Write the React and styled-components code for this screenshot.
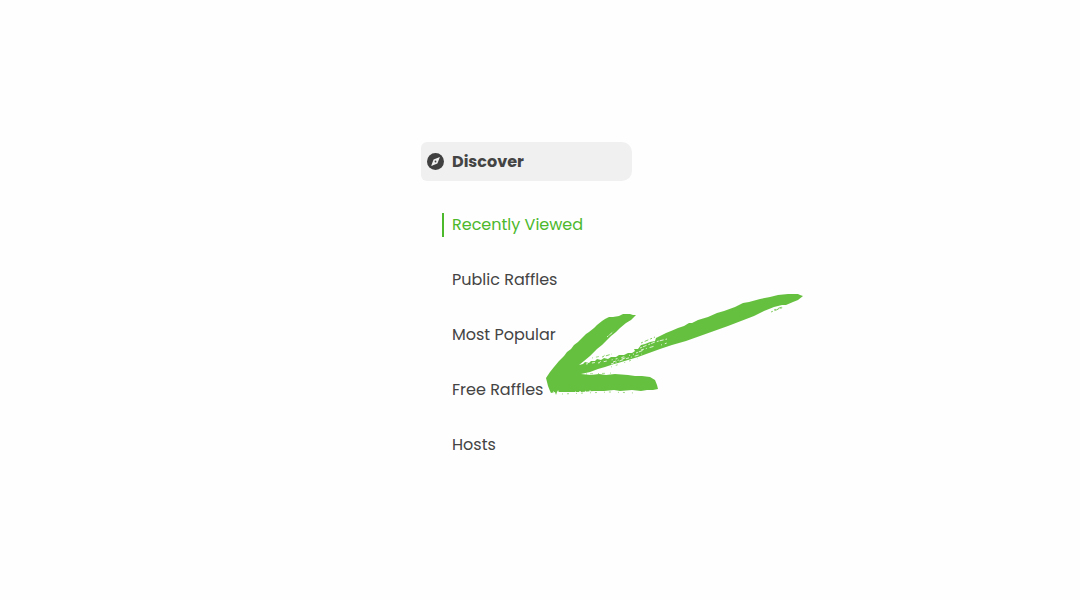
import styled, { createGlobalStyle } from "styled-components"

const GlobalStyle = createGlobalStyle`
    * {
        box-sizing: border-box;
    }
    body {
        margin: 0;
        background-color: #fefefe;
        font-family: Poppins, Inter, sans-serif;
        color: #444444;
    }
`
const Container = styled.main`
    min-height: 100vh;
    display: flex;
    align-items: center;
    justify-content: center;
    padding: 14px 27px 0px 0px;
`
const Sidebar = styled.nav`
    flex: 0 1 211px;
`
const Header = styled.button`
    width: 100%;
    display: flex;
    align-items: center;
    gap: 8px;
    padding: 8px 6px;
    border: none;
    border-radius: 6px 10px 10px 6px;
    background-color: #f0f0f0;
    color: inherit;
    font-family: inherit;
    font-size: 16px;
    line-height: 23px;
    font-weight: 700;
    cursor: pointer;
`
const List = styled.ul`
    list-style: none;
    margin: 16px 0px 0px;
    padding: 0px 0px 0px 21px;
`
const Item = styled.li`
    position: relative;
    height: 55px;
    display: flex;
    align-items: center;
`
const Link = styled.a`
    padding-left: 8px;
    border-left: 2px solid ${(props) => (props.$active ? "#4cb82c" : "transparent")};
    color: ${(props) => (props.$active ? "#4cb82c" : "inherit")};
    font-size: 16px;
    line-height: 24px;
    white-space: nowrap;
    text-decoration: none;
`
const Arrow = styled.svg`
    position: absolute;
    left: 102px;
    bottom: 19px;
    width: 262px;
    height: 108px;
    pointer-events: none;
`

const CompassIcon = () => (
    <svg width="17" height="17" viewBox="0 0 17 17" aria-hidden="true">
        <circle cx="8.5" cy="8.5" r="8.5" fill="#404040" />
        <path d="M12.9 4.1 10.4 10.4 4.1 12.9 6.6 6.6Z" fill="#f0f0f0" />
        <circle cx="8.5" cy="8.5" r="0.9" fill="#404040" />
    </svg>
)

const BrushArrow = () => (
    <Arrow viewBox="544 290 262 108" aria-hidden="true">
        <path
            fill="#66c03f"
            d="M546 378 548 375 550 372 554 367 559 361 564 356 567 352 571 349 574 345 578 342 582 338 586 334 589 332 594 328 597 325 602 321 605 319 609 317 613 317 619 316 623 314 630 314 633 315 636 315 631 320 626 323 620 328 616 332 611 336 607 340 602 345 597 349 590 356 584 361 579 365 583 364 585 362 589 363 591 361 595 361 597 359 601 360 604 358 608 359 611 357 616 357 619 355 624 355 628 353 632 353 635 351 634 349 638 349 641 345 645 344 650 342 655 341 656 338 660 336 666 333 671 331 678 328 684 326 689 323 692 323 698 320 708 317 717 313 724 311 735 307 743 303 749 302 760 299 770 297 778 295 788 294 798 294 800 295 803 296 798 300 793 302 786 305 782 305 774 307 764 311 754 316 741 321 728 326 714 331 700 336 686 341 672 345 660 349 649 353 638 357 628 360 618 363 614 364 605 367 598 369 590 372 581 374 591 375 599 374 606 375 615 374 628 375 635 376 642 376 650 377 655 380 657 385 658 389 653 390 647 390 641 391 632 390 620 391 614 390 604 391 594 391 581 392 574 392 564 392 557 392 556 395 555 392 551 393 550 391 548 386Z"
        />
        <g fill="none" stroke="#fefefe" strokeWidth="0.8">
            <path strokeDasharray="2 4 3 5 1 3" d="M586 364 604 361 M598 363 620 358 634 354" />
            <path strokeDasharray="3 2 1 3 4 3" d="M611 364 625 359 642 354 M613 362 628 357 M641 350 655 346" />
            <path strokeDasharray="2 1 4 2" d="M636 353 644 350 M640 348 655 342 667 339 M607 337 614 331" />
            <path strokeDasharray="1 3 2 4" d="M661 345 670 342 M553 392 560 391 M575 392 592 391" />
        </g>
        <g fill="none" stroke="#66c03f">
            <path strokeWidth="0.8" strokeDasharray="2 2 4 2" d="M771 312 784 307 M774 310 782 307 M641 343 655 337 M602 357 612 354" />
            <path strokeWidth="0.6" strokeDasharray="1 4 2 7" d="M562 394 585 393 610 392 635 393 M611 367 638 358" />
            <path strokeWidth="0.6" strokeDasharray="1 3 3 5" d="M586 374 614 373 M592 358 606 355" />
        </g>
    </Arrow>
)

const App = () => {
    return (
        <>
            <GlobalStyle />
            <Container>
                <Sidebar>
                    <Header type="button">
                        <CompassIcon />
                        Discover
                    </Header>
                    <List>
                        <Item><Link href="#recent" $active>Recently Viewed</Link></Item>
                        <Item><Link href="#public">Public Raffles</Link></Item>
                        <Item><Link href="#popular">Most Popular</Link></Item>
                        <Item>
                            <Link href="#free">Free Raffles</Link>
                            <BrushArrow />
                        </Item>
                        <Item><Link href="#hosts">Hosts</Link></Item>
                    </List>
                </Sidebar>
            </Container>
        </>
    )
}

export default App
